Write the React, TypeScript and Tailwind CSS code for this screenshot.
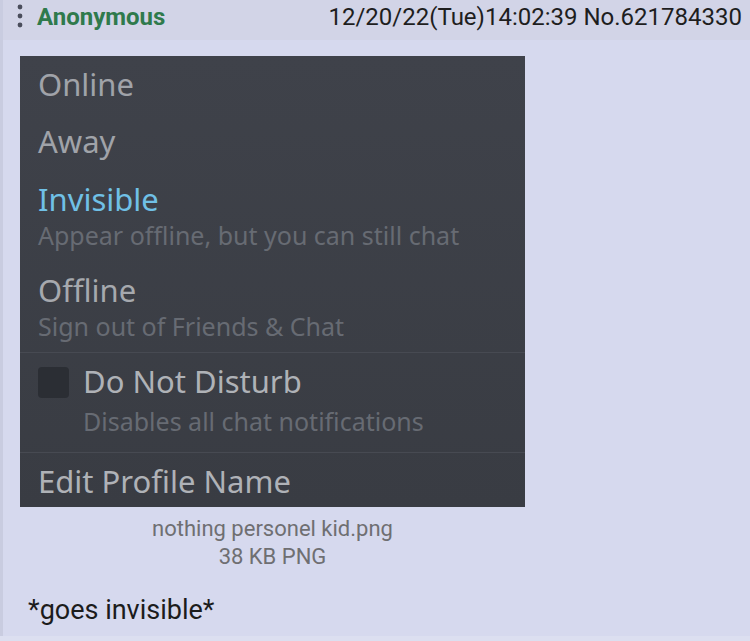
const menuFont = { fontFamily: '"Noto Sans", "Open Sans", sans-serif' };

const Kebab = () => (
  <svg width="8" height="30" viewBox="0 0 8 30" className="mt-[2px]">
    <circle cx="4" cy="5" r="2.4" fill="#4a4d5c" />
    <circle cx="4" cy="14" r="2.4" fill="#4a4d5c" />
    <circle cx="4" cy="23" r="2.4" fill="#4a4d5c" />
  </svg>
);

const StatusMenu = () => (
  <div
    className="flex w-[505px] flex-col bg-gradient-to-b from-[#3f424a] to-[#393c43] pl-[18px]"
    style={menuFont}
  >
    <div className="text-[31px] leading-[57px] text-[#a0a3a9]">Online</div>
    <div className="text-[31px] leading-[57px] text-[#a0a3a9]">Away</div>
    <div className="flex flex-col pt-[9px] pb-[10px]">
      <span className="text-[31px] leading-[40px] text-[#70c0e6]">Invisible</span>
      <span className="text-[25px] leading-[32px] text-[#676b73]">Appear offline, but you can still chat</span>
    </div>
    <div className="flex flex-col pt-[9px] pb-[10px]">
      <span className="text-[31px] leading-[40px] text-[#a6a9ae]">Offline</span>
      <span className="text-[25px] leading-[32px] text-[#676b73]">Sign out of Friends &amp; Chat</span>
    </div>
    <div className="-ml-[18px] h-px bg-[#474a52]" />
    <div className="flex items-start gap-[14px] pt-[8px] pb-[11px]">
      <div className="mt-[6px] h-[31px] w-[31px] rounded-[4px] bg-[#2b2e34]" />
      <div className="flex flex-col">
        <span className="text-[31px] leading-[40px] text-[#afb2b7]">Do Not Disturb</span>
        <span className="text-[25px] leading-[40px] text-[#676b73]">Disables all chat notifications</span>
      </div>
    </div>
    <div className="-ml-[18px] h-px bg-[#474a52]" />
    <div className="pt-[8px] pb-[6px] text-[31px] leading-[40px] text-[#afb2b7]">Edit Profile Name</div>
  </div>
);

export default function App() {
  return (
    <div className="h-[641px] w-[750px] bg-[#dcdff0]" style={{ fontFamily: 'Roboto, "Liberation Sans", sans-serif' }}>
      <div className="flex h-[636px] flex-col border-l-[3px] border-[#c9cce0] bg-[#d6d9ee]">
        <div className="flex h-[40px] items-start justify-between bg-[#d2d4e7] pr-[8px] pl-[13px]">
          <div className="flex items-start gap-[13px]">
            <Kebab />
            <span className="text-[24px] leading-[34px] font-bold text-[#2f7a4c]">Anonymous</span>
          </div>
          <span className="text-[24px] leading-[34px] text-[#1e1e1e]">12/20/22(Tue)14:02:39 No.621784330</span>
        </div>
        <div className="ml-[17px] flex w-[505px] flex-col items-center pt-[16px]">
          <StatusMenu />
          <div className="mt-[8px] text-center text-[22px] leading-[28px] text-[#6f6f72]">
            <div>nothing personel kid.png</div>
            <div>38 KB PNG</div>
          </div>
        </div>
        <p className="mt-[21px] pl-[25px] text-[27px] leading-[36px] text-[#1c1c1c]">*goes invisible*</p>
      </div>
    </div>
  );
}
